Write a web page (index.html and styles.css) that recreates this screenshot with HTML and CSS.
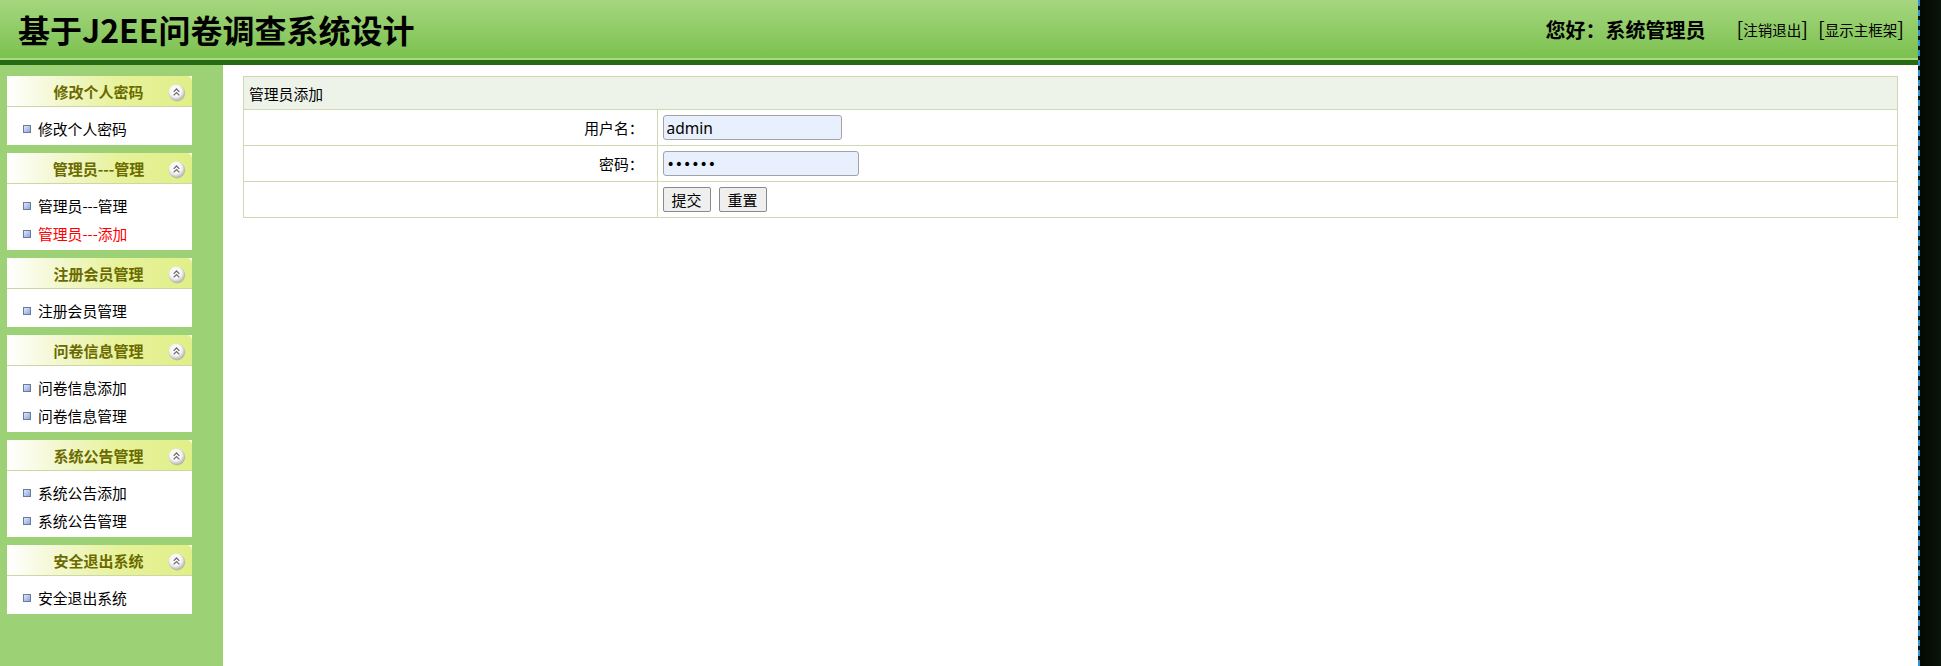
FILE: index.html
```html
<!DOCTYPE html>
<html lang="zh-CN">
<head>
<meta charset="utf-8">
<title>基于J2EE问卷调查系统设计</title>
<link rel="stylesheet" href="styles.css">
</head>
<body>
<div class="page">
  <header class="top">
    <h1 class="title">基于J2EE问卷调查系统设计</h1>
    <div class="user">
      <span class="hello">您好：系统管理员</span>
      <a class="tlink" href="#"><span class="br">[</span>注销退出<span class="br">]</span></a>
      <a class="tlink" href="#"><span class="br">[</span>显示主框架<span class="br">]</span></a>
    </div>
  </header>
  <div class="top-line"></div>
  <div class="top-stripe"></div>
  <div class="main">
    <aside class="side">
      <div class="box">
        <div class="box-head"><span>修改个人密码</span><svg class="tog" viewBox="0 0 20 20"><use href="#tg"/></svg></div>
        <ul class="box-body"><li>修改个人密码</li></ul>
      </div>
      <div class="box">
        <div class="box-head"><span>管理员---管理</span><svg class="tog" viewBox="0 0 20 20"><use href="#tg"/></svg></div>
        <ul class="box-body"><li>管理员---管理</li><li class="on">管理员---添加</li></ul>
      </div>
      <div class="box">
        <div class="box-head"><span>注册会员管理</span><svg class="tog" viewBox="0 0 20 20"><use href="#tg"/></svg></div>
        <ul class="box-body"><li>注册会员管理</li></ul>
      </div>
      <div class="box">
        <div class="box-head"><span>问卷信息管理</span><svg class="tog" viewBox="0 0 20 20"><use href="#tg"/></svg></div>
        <ul class="box-body"><li>问卷信息添加</li><li>问卷信息管理</li></ul>
      </div>
      <div class="box">
        <div class="box-head"><span>系统公告管理</span><svg class="tog" viewBox="0 0 20 20"><use href="#tg"/></svg></div>
        <ul class="box-body"><li>系统公告添加</li><li>系统公告管理</li></ul>
      </div>
      <div class="box">
        <div class="box-head"><span>安全退出系统</span><svg class="tog" viewBox="0 0 20 20"><use href="#tg"/></svg></div>
        <ul class="box-body"><li>安全退出系统</li></ul>
      </div>
    </aside>
    <section class="content">
      <table class="form">
        <tr><td class="cap" colspan="2">管理员添加</td></tr>
        <tr><td class="lab">用户名：</td><td class="val"><input class="inp u" type="text" value="admin"></td></tr>
        <tr><td class="lab">密码：</td><td class="val"><input class="inp p" type="password" value="123456"></td></tr>
        <tr><td class="lab"></td><td class="val"><button class="btn">提交</button><button class="btn">重置</button></td></tr>
      </table>
    </section>
  </div>
</div>
<div class="edge"></div>
<svg width="0" height="0" class="defs">
  <defs>
    <radialGradient id="rg" cx="45%" cy="40%" r="60%">
      <stop offset="0" stop-color="#ffffff"/>
      <stop offset="0.6" stop-color="#f6f6f6"/>
      <stop offset="1" stop-color="#b8b8b8"/>
    </radialGradient>
    <g id="tg">
      <circle cx="10.6" cy="10.8" r="8.6" fill="#9a9a9a" opacity="0.55"/>
      <circle cx="10" cy="10" r="8.4" fill="url(#rg)"/>
      <polyline points="7,9.3 10,6.3 13,9.3" fill="none" stroke="#6a6a6a" stroke-width="1.3"/>
      <polyline points="7,13 10,10 13,13" fill="none" stroke="#6a6a6a" stroke-width="1.3"/>
    </g>
  </defs>
</svg>
</body>
</html>
```
FILE: styles.css
```css
html, body {
  margin: 0;
  padding: 0;
}
body {
  display: flex;
  width: 1941px;
  height: 666px;
  overflow: hidden;
  background: #050b05;
  font-family: "Noto Sans CJK SC", "Noto Sans", sans-serif;
  font-size: 15px;
  color: #000;
}
.defs {
  position: absolute;
  width: 0;
  height: 0;
}
.page {
  width: 1918px;
  display: flex;
  flex-direction: column;
  background: #fff;
}
.edge {
  flex: 1;
  border-left: 2px dashed #2d93d6;
  background: linear-gradient(to right, #030803, #0a140a);
}
.top {
  height: 58px;
  display: flex;
  align-items: center;
  justify-content: space-between;
  background: linear-gradient(#a6d67f, #7bc14f);
  padding: 0 14px 0 18px;
}
.title {
  margin: 0;
  font-size: 32px;
  font-weight: bold;
  line-height: 58px;
  letter-spacing: 0;
  color: #000;
}
.user {
  display: flex;
  align-items: center;
  padding-top: 1px;
}
.hello {
  font-size: 20px;
  font-weight: bold;
  margin-right: 21px;
}
.tlink {
  color: #000;
  text-decoration: none;
  font-size: 14.5px;
  display: flex;
  align-items: center;
  margin-left: 10px;
}
.br {
  font-size: 20px;
  line-height: 20px;
  position: relative;
  top: -1px;
}
.top-line {
  height: 2px;
  background: #a9da82;
}
.top-stripe {
  height: 5px;
  background: #286913;
}
.main {
  flex: 1;
  display: flex;
}
.side {
  width: 223px;
  background: #9dd176;
  padding: 11px 0 0 7px;
  box-sizing: border-box;
}
.box {
  width: 185px;
  margin-bottom: 8px;
  background: #fff;
}
.box-head {
  height: 30px;
  border-bottom: 1px solid #cdd6a6;
  border-radius: 5px 5px 0 0;
  background: linear-gradient(to right, #ffffff 0%, #f4f8d4 25%, #e7f29b 60%, #e1ef88 100%);
  display: flex;
  align-items: center;
  justify-content: center;
  position: relative;
}
.box-head span {
  font-weight: bold;
  font-size: 15px;
  color: #6a6a00;
  position: relative;
  left: -1px;
}
.tog {
  position: absolute;
  right: 6px;
  top: 7px;
  width: 19px;
  height: 19px;
}
.box-body {
  list-style: none;
  margin: 0;
  padding: 8px 0 2px 0;
}
.box-body li {
  height: 28px;
  line-height: 28px;
  padding-left: 31px;
  position: relative;
  font-size: 14.8px;
  white-space: nowrap;
}
.box-body li::before {
  content: "";
  position: absolute;
  left: 16px;
  top: 10px;
  width: 6px;
  height: 6px;
  border: 1px solid #6d7a94;
  background: linear-gradient(135deg, #dde7fb, #8aa7e0);
}
.box-body li.on {
  color: #ff0000;
}
.content {
  flex: 1;
  padding: 11px 20px 0 20px;
}
.form {
  width: 100%;
  border-collapse: collapse;
}
.form td {
  border: 1px solid #cfd8b1;
  padding: 0;
  font-size: 14.8px;
}
.form .cap {
  height: 32px;
  background: #eef3e9;
  padding-left: 5px;
}
.form .lab {
  width: 25%;
  height: 35px;
  text-align: right;
  padding-right: 13px;
}
.form .val {
  padding-left: 5px;
}
.inp {
  height: 25px;
  box-sizing: border-box;
  border: 1px solid #a3a3a3;
  border-radius: 3px;
  background: #e8f0fe;
  font-family: "Noto Sans", sans-serif;
  font-size: 15.5px;
  padding: 0 3px;
  vertical-align: middle;
  color: #000;
}
.inp.u {
  width: 179px;
}
.inp.p {
  width: 196px;
  font-family: "DejaVu Sans", sans-serif;
  font-size: 14px;
  letter-spacing: 0;
}
.btn {
  height: 25px;
  box-sizing: border-box;
  padding: 0 8px;
  border: 1px solid #8a8a8a;
  border-radius: 2px;
  background: #efefef;
  font-family: "Noto Sans CJK SC", sans-serif;
  font-size: 15px;
  line-height: 21px;
  margin-right: 8px;
  vertical-align: middle;
  color: #000;
}
```
